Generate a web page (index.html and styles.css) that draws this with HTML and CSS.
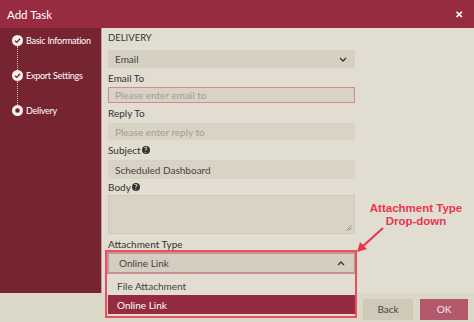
FILE: index.html
```html
<!DOCTYPE html>
<html>
<head>
<meta charset="utf-8">
<link rel="stylesheet" href="styles.css">
</head>
<body>
<div class="dialog">
  <div class="titlebar">
    <span class="title">Add Task</span>
    <span class="close">&#x2715;</span>
  </div>
  <div class="main">
    <div class="sidebar">
      <div class="step done"><span class="dot"><svg width="11" height="11" viewBox="0 0 11 11"><circle cx="5.5" cy="5.5" r="5.5" fill="#f4f0ec"/><path d="M3 5.7 L4.8 7.4 L8 3.8" fill="none" stroke="#6d2230" stroke-width="1.3"/></svg></span>Basic Information</div>
      <div class="link"></div>
      <div class="step done"><span class="dot"><svg width="11" height="11" viewBox="0 0 11 11"><circle cx="5.5" cy="5.5" r="5.5" fill="#f4f0ec"/><path d="M3 5.7 L4.8 7.4 L8 3.8" fill="none" stroke="#6d2230" stroke-width="1.3"/></svg></span>Export Settings</div>
      <div class="link"></div>
      <div class="step current"><span class="dot"><svg width="11" height="11" viewBox="0 0 11 11"><circle cx="5.5" cy="5.5" r="5.5" fill="#f4f0ec"/><circle cx="5.5" cy="5.5" r="2.2" fill="#6d2230"/></svg></span>Delivery</div>
    </div>
    <div class="content">
      <div class="section">DELIVERY</div>
      <div class="select first"><span>Email</span><svg class="chev" width="8" height="5" viewBox="0 0 8 5"><path d="M1 1 L4 4 L7 1" fill="none" stroke="#333" stroke-width="1.3"/></svg></div>
      <div class="label l1">Email To</div>
      <div class="input error"><span class="ph">Please enter email to</span></div>
      <div class="label">Reply To</div>
      <div class="input"><span class="ph">Please enter reply to</span></div>
      <div class="label">Subject<span class="help">?</span></div>
      <div class="input tall"><span>Scheduled Dashboard</span></div>
      <div class="label l4">Body<span class="help">?</span></div>
      <div class="textarea"><svg class="grip" width="6" height="6" viewBox="0 0 6 6"><path d="M0.5 5.5 L5.5 0.5 M3 5.5 L5.5 3" stroke="#777" stroke-width="0.8"/></svg></div>
      <div class="label l5">Attachment Type</div>
      <div class="dropdown">
        <div class="select open"><span>Online Link</span><svg class="chev" width="8" height="5" viewBox="0 0 8 5"><path d="M1 4 L4 1 L7 4" fill="none" stroke="#333" stroke-width="1.3"/></svg></div>
        <div class="options">
          <div class="opt">File Attachment</div>
          <div class="opt sel">Online Link</div>
        </div>
        <div class="ring"></div>
      </div>
    </div>
  </div>
  <div class="footer">
    <button class="btn back">Back</button>
    <button class="btn ok">OK</button>
  </div>
  <div class="note">Attachment Type<br>Drop-down</div>
  <svg class="arrow" width="40" height="40" viewBox="0 0 40 40"><path d="M27 3 L6 22" stroke="#e8364f" stroke-width="2.2" fill="none"/><path d="M1 27 L4 17 L11 24 Z" fill="#e8364f"/></svg>
</div>
</body>
</html>
```
FILE: styles.css
```css
* { box-sizing: border-box; }
html, body { margin: 0; padding: 0; }
body {
  width: 474px; height: 322px; overflow: hidden;
  font-family: "Lato", "Noto Sans", sans-serif;
  font-size: 10px; color: #333;
  background: #e1ddd0;
}
.dialog { position: relative; width: 474px; height: 322px; display: flex; flex-direction: column; }
.titlebar {
  height: 28px; flex: none; background: #972c41; color: #fff;
  display: flex; align-items: center; justify-content: space-between;
  padding: 0 11px 0 7px;
}
.title { font-size: 11.5px; }
.close { font-size: 10px; font-weight: bold; }
.main { flex: 1; display: flex; min-height: 0; }
.sidebar {
  width: 101px; flex: none; background: #772431; color: #fff;
  padding: 7px 0 0 12px;
}
.step { display: flex; align-items: center; height: 11px; font-size: 9px; letter-spacing: -0.25px; white-space: nowrap; }
.dot { width: 11px; height: 11px; margin-right: 3px; display: flex; }
.link { height: 24px; width: 0; margin-left: 5px; border-left: 1px dotted #d9b8be; }
.content {
  flex: 1; background: #e1ddd0; padding: 1px 119px 0 6px;
  border-left: 1px solid #c99aa3;
}
.section { font-size: 9.5px; height: 17px; line-height: 17px; color: #333; }
.select {
  height: 18px; background: #d5d0c1; display: flex; align-items: center;
  justify-content: space-between; padding: 0 7px; color: #444;
}
.select.first { margin-top: 4px; }
.chev { margin-right: 1px; }
.label { height: 20px; color: #333; display: flex; align-items: center; }
.label.l1 { height: 19px; }
.label.l4 { height: 16px; }
.label.l5 { height: 19px; }
.help {
  display: inline-flex; width: 8px; height: 8px; border-radius: 50%;
  background: #333; color: #e1ddd0; font-size: 7px; font-weight: bold;
  align-items: center; justify-content: center; margin-left: 1px;
}
.input {
  height: 17px; background: #d8d3c4; display: flex; align-items: center; padding: 0 7px;
  color: #444;
}
.input.tall { height: 19px; }
.input.error { height: 16px; border: 1px solid #d68790; padding-left: 6px; }
.ph { color: #a29d92; }
.textarea {
  height: 39px; background: #d8d3c4; border: 1px solid #cdc8b9; position: relative;
}
.grip { position: absolute; right: 2px; bottom: 2px; }
.dropdown { position: relative; z-index: 2; height: 20px; }
.select.open {
  height: 20px; border: 1px solid #a7a294; outline: 1px solid #e8828c;
  padding: 0 8px 0 10px; background: #d3cebf;
}
.options { position: absolute; left: 0; right: 0; top: 21px; height: 44px; background: #e1ddd0; padding-top: 3px; }
.opt { height: 17px; display: flex; align-items: center; padding: 0 9px; color: #444; margin-bottom: 1px; }
.opt.sel { background: #952b40; color: #fff; height: 19px; }
.ring {
  position: absolute; left: -3px; right: -2px; top: -3px; height: 68px;
  border: 2px solid #e8505f; pointer-events: none;
}
.footer {
  height: 29px; flex: none; background: #dcd8c8; display: flex; justify-content: flex-end;
  align-items: center; gap: 7px; padding: 0 6px 0 0;
}
.btn {
  font-family: inherit; font-size: 10px; border: none; height: 21px;
  margin-top: 3px;
}
.back { background: #cfcab8; color: #444; width: 50px; }
.ok { background: #b25a6c; color: #f4e9ea; width: 48px; }
.note {
  position: absolute; left: 361px; top: 202px; width: 110px; text-align: center;
  color: #e8364f; font-family: "Liberation Sans", Arial, sans-serif; font-weight: bold;
  font-size: 11.5px; line-height: 12.5px;
}
.arrow { position: absolute; left: 356px; top: 225px; z-index: 3; }
```
